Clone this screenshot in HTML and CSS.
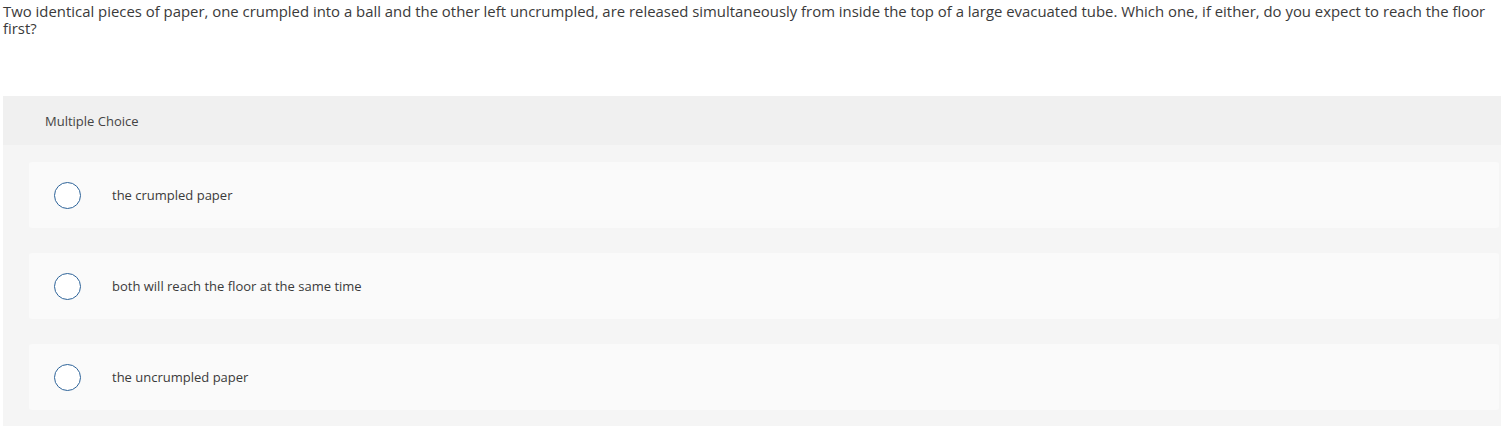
FILE: index.html
```html
<!DOCTYPE html>
<html>
<head>
<meta charset="utf-8">
<link rel="stylesheet" href="styles.css">
</head>
<body>
<div class="page">
  <p class="question">Two identical pieces of paper, one crumpled into a ball and the other left uncrumpled, are released simultaneously from inside the top of a large evacuated tube. Which one, if either, do you expect to reach the floor first?</p>
  <div class="mc">
    <div class="mc-head">Multiple Choice</div>
    <div class="mc-body">
      <div class="option"><span class="radio"></span><span class="label">the crumpled paper</span></div>
      <div class="option"><span class="radio"></span><span class="label">both will reach the floor at the same time</span></div>
      <div class="option"><span class="radio"></span><span class="label">the uncrumpled paper</span></div>
    </div>
  </div>
</div>
</body>
</html>
```

FILE: styles.css
```css
html, body {
  margin: 0;
  padding: 0;
  background: #ffffff;
}
body {
  font-family: "Open Sans", "Noto Sans", sans-serif;
  color: #3a3a3a;
}
.page {
  padding: 0 0 0 3px;
}
.question {
  margin: 0;
  padding-top: 3px;
  font-size: 14.9px;
  line-height: 17px;
  color: #3a3a3a;
}
.mc {
  margin-top: 59px;
  background: #f5f5f5;
}
.mc-head {
  height: 49px;
  background: #f0f0f0;
  display: flex;
  align-items: center;
  padding-left: 42px;
  font-size: 13px;
  color: #444444;
}
.mc-body {
  display: flex;
  flex-direction: column;
  gap: 25px;
  padding: 17px 2px 16px 26px;
}
.option {
  height: 66px;
  background: #fafafa;
  border-radius: 3px;
  display: flex;
  align-items: center;
  padding-left: 25px;
}
.radio {
  width: 25px;
  height: 25px;
  border: 1.5px solid #2d6399;
  border-radius: 50%;
  background: #ffffff;
  flex: none;
}
.label {
  margin-left: 31px;
  font-size: 13px;
  color: #3a3a3a;
}
```
